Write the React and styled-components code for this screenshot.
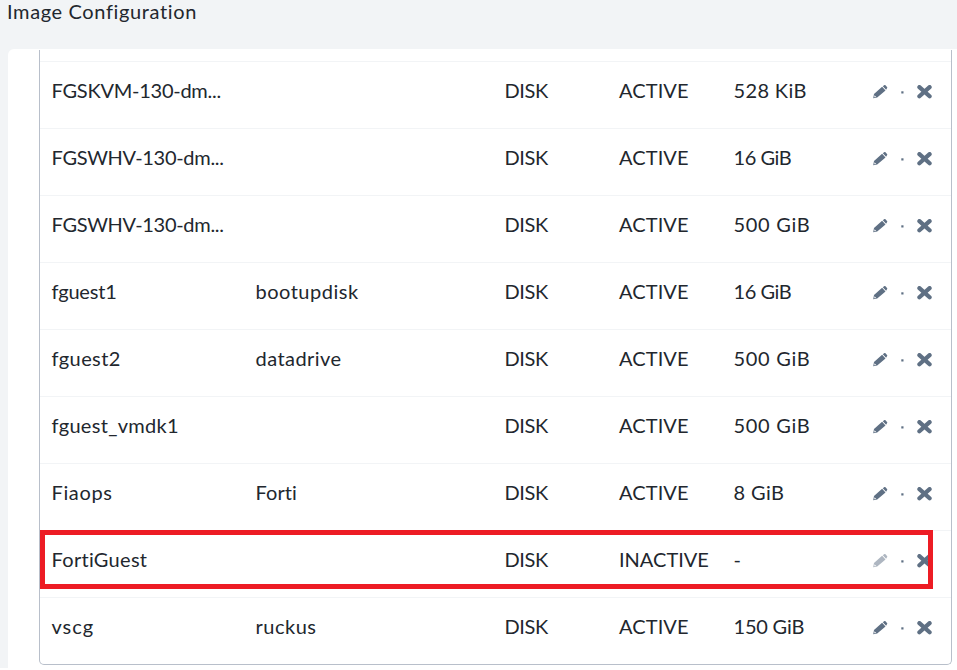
import React from 'react';
import styled, { createGlobalStyle } from 'styled-components';

const GlobalStyle = createGlobalStyle`
  * {
    box-sizing: border-box;
  }
  body {
    margin: 0;
    background: #fff;
    overflow: hidden;
  }
`

const Page = styled.div`
  width: 957px;
  height: 668px;
  display: flex;
  flex-direction: column;
  background: #f2f4f6;
  color: #22272e;
  font-family: Lato, "Liberation Sans", sans-serif;
  font-variant-ligatures: none;
`

const Title = styled.h1`
  flex: none;
  height: 49px;
  margin: 0;
  padding-left: 7px;
  font-size: 20px;
  line-height: 23px;
  font-weight: 400;
  letter-spacing: 0.63px;
`

const Card = styled.div`
  flex: 1;
  margin-left: 8px;
  padding: 1px 5px 3px 31px;
  background: #fff;
  border-top-left-radius: 6px;
`

const Table = styled.div`
  position: relative;
  height: 615px;
  border: 1px solid #b8bfca;
  border-top: none;
  border-radius: 0 0 5px 5px;
`

/* what is left of the row scrolled under the title */
const ScrolledRow = styled.div`
  height: 12px;
  border-bottom: 1px solid #f2f4f6;
`

const Row = styled.div`
  display: grid;
  grid-template-columns: 204px 249px 114.5px 114.5px 139.5px 1fr;
  height: 67px;
  padding-left: 11.5px;
  border-bottom: 1px solid ${(props) => (props.$last ? 'transparent' : '#f2f4f6')};
`

const Cell = styled.span`
  font-size: 20px;
  line-height: 24px;
  padding-top: 16px;
  white-space: nowrap;
  letter-spacing: ${(props) => props.$spacing || 0}px;
`

const Actions = styled.div`
  display: flex;
  align-items: center;
  height: 14px;
  margin-top: 23px;
  color: #5f7084;
  svg {
    display: block;
    flex: none;
    fill: currentColor;
  }
`

const EditIcon = styled.svg`
  width: 15px;
  height: 14px;
  opacity: ${(props) => (props.$disabled ? 0.5 : 1)};
`

const DotIcon = styled.svg`
  width: 3px;
  height: 3px;
  margin: 1px 13px 0 13px;
`

const RemoveIcon = styled.svg`
  width: 15px;
  height: 14px;
`

const Highlight = styled.div`
  position: absolute;
  left: 0;
  top: 480px;
  width: 893px;
  height: 59px;
  border: 5px solid #ed1c24;
`

const images = [
  { name: 'FGSKVM-130-dm...', size: '528 KiB' },
  { name: 'FGSWHV-130-dm...', size: '16 GiB' },
  { name: 'FGSWHV-130-dm...', size: '500 GiB' },
  { name: 'fguest1', note: 'bootupdisk', size: '16 GiB' },
  { name: 'fguest2', note: 'datadrive', size: '500 GiB' },
  { name: 'fguest_vmdk1', size: '500 GiB' },
  { name: 'Fiaops', note: 'Forti', size: '8 GiB' },
  { name: 'FortiGuest', state: 'INACTIVE', size: '-' },
  { name: 'vscg', note: 'ruckus', size: '150 GiB' },
]

// letter spacing in px
const spacing = {
  'FGSKVM-130-dm...': -0.25,
  'FGSWHV-130-dm...': -0.3,
  fguest1: -0.2,
  fguest2: 0.4,
  fguest_vmdk1: 0.3,
  Fiaops: 0.65,
  FortiGuest: 0.3,
  vscg: 0.95,
  bootupdisk: 0.5,
  datadrive: 0.45,
  Forti: 0.05,
  ruckus: 0.5,
  DISK: -0.4,
  ACTIVE: 0.1,
  '528 KiB': 0.35,
  '16 GiB': -0.45,
  '500 GiB': 0.7,
  '8 GiB': 0.4,
  '150 GiB': -0.2,
}

const TextCell = ({ text }) => <Cell $spacing={spacing[text]}>{text}</Cell>

const ImageRow = ({ image, last }) => {
  const inactive = image.state === 'INACTIVE'
  return (
    <Row $last={last}>
      <TextCell text={image.name} />
      <TextCell text={image.note} />
      <TextCell text="DISK" />
      <TextCell text={image.state || 'ACTIVE'} />
      <TextCell text={image.size} />
      <Actions>
        <EditIcon viewBox="0 0 15 14" $disabled={inactive}>
          <path fillRule="evenodd" d="M0.2 13.2 L1 9.1 L9.1 1.8 L12.5 5.4 L4.2 12.6 Z M1.6 10.3 L1.2 12.2 L3.2 11.9 Z" />
          <path d="M9.8 1.2 L11.1 0.2 Q11.8 -0.3 12.5 0.3 L14 1.9 Q14.6 2.6 14 3.3 L13.1 4.7 Z" />
        </EditIcon>
        <DotIcon viewBox="0 0 3 3">
          <rect x="0.3" y="0.3" width="2.2" height="2.2" />
        </DotIcon>
        <RemoveIcon viewBox="0 0 15 14">
          <path d="M2.4 2.1 L12.6 11.3 M12.6 2.1 L2.4 11.3" stroke="currentColor" strokeWidth="4.2" strokeLinecap="round" />
        </RemoveIcon>
      </Actions>
    </Row>
  )
}

const App = () => {
  return (
    <>
      <GlobalStyle />
      <Page>
        <Title>Image Configuration</Title>
        <Card>
          <Table>
            <ScrolledRow />
            {images.map((image, i) => <ImageRow key={i} image={image} last={i === images.length - 1} />)}
            <Highlight />
          </Table>
        </Card>
      </Page>
    </>
  );
};

export default App;
